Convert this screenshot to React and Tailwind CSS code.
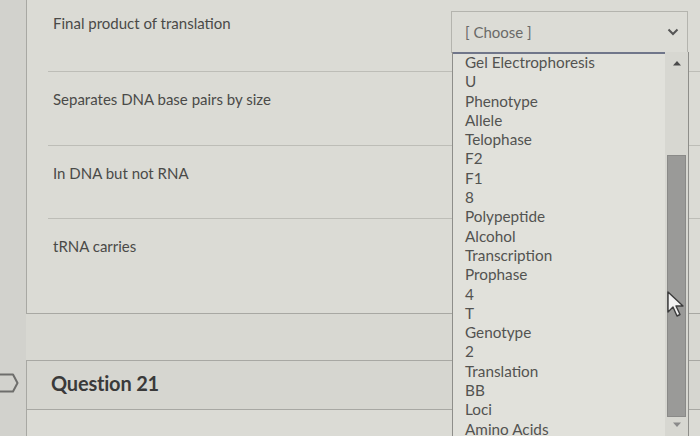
import React from "react";

const items = [
  "Gel Electrophoresis", "U", "Phenotype", "Allele", "Telophase", "F2", "F1", "8",
  "Polypeptide", "Alcohol", "Transcription", "Prophase", "4", "T", "Genotype", "2",
  "Translation", "BB", "Loci", "Amino Acids",
];

function Row({ text, first, last }) {
  return (
    <div className={`${last ? "h-[94px]" : first ? "h-[72px]" : "h-[74px]"} ml-[21px] ${last ? "" : "border-b border-[#bdbdb7]"} flex`}>
      <div className={`pl-[5px] ${first ? "pt-[13px]" : "pt-[17px]"} text-[15px] leading-[20px] text-[#4a4a48]`}>{text}</div>
    </div>
  );
}

export default function App() {
  return (
    <div
      className="relative w-[700px] h-[436px] overflow-hidden bg-[#d8d8d2] flex"
      style={{ fontFamily: "Lato, 'Open Sans', sans-serif" }}
    >
      {/* left gutter */}
      <div className="w-[26px] shrink-0 bg-[#d2d2cd] flex flex-col">
        <div className="mt-[373px]">
          <svg width="20" height="20" viewBox="0 0 20 20">
            <path d="M-2 1.5 H13 L17.5 10 L13 18.5 H-2" fill="none" stroke="#6e6e6c" strokeWidth="2" strokeLinejoin="round" />
          </svg>
        </div>
      </div>

      {/* main column */}
      <div className="flex-1 flex flex-col">
        <div className="h-[314px] border-l border-b border-[#a8a8a3] bg-[#dbdbd5] flex flex-col">
          <Row text="Final product of translation" first />
          <Row text="Separates DNA base pairs by size" />
          <Row text="In DNA but not RNA" />
          <Row text="tRNA carries" last />
        </div>
        <div className="h-[46px]" />
        <div className="flex-1 border-l border-t border-[#a8a8a3] bg-[#dbdbd5] flex flex-col">
          <div className="h-[49px] border-b border-[#a8a8a3] bg-[#d6d6d0] flex items-center pl-[24px] pb-[4px]">
            <span className="text-[20px] font-bold text-[#3a3a3a] tracking-[-0.2px]">Question 21</span>
          </div>
        </div>
      </div>

      {/* select box */}
      <div className="absolute left-[451px] top-[11px] w-[237px] h-[42px] border border-[#b4b4ae] bg-[#dcdcd6] flex items-center justify-between pl-[13px] pr-[8px]">
        <span className="text-[15px] text-[#6a6a68]">[ Choose ]</span>
        <svg width="12" height="8" viewBox="0 0 12 8">
          <path d="M1.5 1.5 L6 6 L10.5 1.5" fill="none" stroke="#555" strokeWidth="2" />
        </svg>
      </div>

      {/* dropdown list */}
      <div className="absolute left-[452px] top-[52px] w-[237px] h-[390px] border-l border-r border-[#8e8e8a] bg-[#e1e1db] flex">
        <div className="flex-1 flex flex-col border-t-2 border-[#70768a] pl-[12px] pt-0 -mt-[0px]">
          <div className="-mt-[1px]">
            {items.map((t) => (
              <div key={t} className="text-[15.3px] leading-[19.3px] text-[#535351] whitespace-nowrap">{t}</div>
            ))}
          </div>
        </div>
        <div className="w-[23px] bg-[#d7d7d1] flex flex-col items-center">
          <svg className="mt-[8px]" width="10" height="6" viewBox="0 0 10 6"><path d="M1 5.5 L5 1 L9 5.5 Z" fill="#4a4a4a" /></svg>
          <div className="mt-[89px] w-[19px] h-[262px] bg-[#9a9a98] border border-[#8a8a88]" />
          <svg className="mt-[5px]" width="10" height="6" viewBox="0 0 10 6"><path d="M1 0.5 L5 5 L9 0.5 Z" fill="#8a8a8a" /></svg>
        </div>
      </div>

      {/* mouse cursor */}
      <svg className="absolute left-[666px] top-[291px]" width="20" height="28" viewBox="0 0 20 28">
        <path d="M2 1 L2 21 L7 16 L11 25 L14 23.5 L10 15 L17 15 Z" fill="#f2f2f2" stroke="#3c3c3c" strokeWidth="1.4" strokeLinejoin="round" />
      </svg>
    </div>
  );
}
